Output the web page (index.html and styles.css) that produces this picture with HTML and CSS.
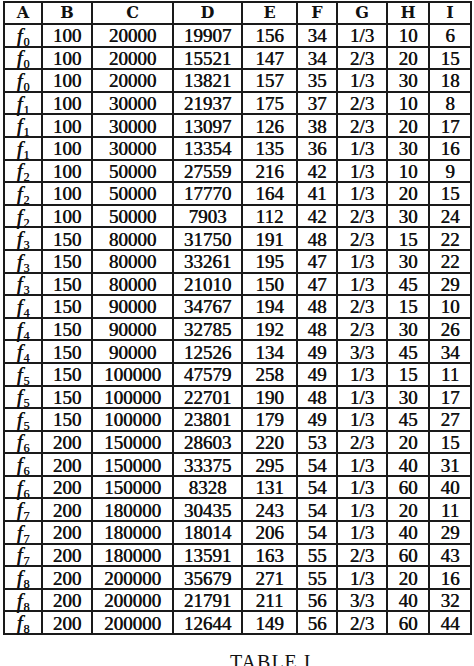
FILE: index.html
```html
<!DOCTYPE html>
<html>
<head>
<meta charset="utf-8">
<link rel="stylesheet" href="styles.css">
</head>
<body>
<table class="data">
<colgroup>
<col class="c-a"><col class="c-b"><col class="c-c"><col class="c-d"><col class="c-e"><col class="c-f"><col class="c-g"><col class="c-h"><col class="c-i">
</colgroup>
<thead>
<tr><th>A</th><th>B</th><th>C</th><th>D</th><th>E</th><th>F</th><th>G</th><th>H</th><th>I</th></tr>
</thead>
<tbody>
<tr><td><span class="fn"><i>f</i><sub>0</sub></span></td><td>100</td><td>20000</td><td>19907</td><td>156</td><td>34</td><td>1/3</td><td>10</td><td>6</td></tr>
<tr><td><span class="fn"><i>f</i><sub>0</sub></span></td><td>100</td><td>20000</td><td>15521</td><td>147</td><td>34</td><td>2/3</td><td>20</td><td>15</td></tr>
<tr><td><span class="fn"><i>f</i><sub>0</sub></span></td><td>100</td><td>20000</td><td>13821</td><td>157</td><td>35</td><td>1/3</td><td>30</td><td>18</td></tr>
<tr><td><span class="fn"><i>f</i><sub>1</sub></span></td><td>100</td><td>30000</td><td>21937</td><td>175</td><td>37</td><td>2/3</td><td>10</td><td>8</td></tr>
<tr><td><span class="fn"><i>f</i><sub>1</sub></span></td><td>100</td><td>30000</td><td>13097</td><td>126</td><td>38</td><td>2/3</td><td>20</td><td>17</td></tr>
<tr><td><span class="fn"><i>f</i><sub>1</sub></span></td><td>100</td><td>30000</td><td>13354</td><td>135</td><td>36</td><td>1/3</td><td>30</td><td>16</td></tr>
<tr><td><span class="fn"><i>f</i><sub>2</sub></span></td><td>100</td><td>50000</td><td>27559</td><td>216</td><td>42</td><td>1/3</td><td>10</td><td>9</td></tr>
<tr><td><span class="fn"><i>f</i><sub>2</sub></span></td><td>100</td><td>50000</td><td>17770</td><td>164</td><td>41</td><td>1/3</td><td>20</td><td>15</td></tr>
<tr><td><span class="fn"><i>f</i><sub>2</sub></span></td><td>100</td><td>50000</td><td>7903</td><td>112</td><td>42</td><td>2/3</td><td>30</td><td>24</td></tr>
<tr><td><span class="fn"><i>f</i><sub>3</sub></span></td><td>150</td><td>80000</td><td>31750</td><td>191</td><td>48</td><td>2/3</td><td>15</td><td>22</td></tr>
<tr><td><span class="fn"><i>f</i><sub>3</sub></span></td><td>150</td><td>80000</td><td>33261</td><td>195</td><td>47</td><td>1/3</td><td>30</td><td>22</td></tr>
<tr><td><span class="fn"><i>f</i><sub>3</sub></span></td><td>150</td><td>80000</td><td>21010</td><td>150</td><td>47</td><td>1/3</td><td>45</td><td>29</td></tr>
<tr><td><span class="fn"><i>f</i><sub>4</sub></span></td><td>150</td><td>90000</td><td>34767</td><td>194</td><td>48</td><td>2/3</td><td>15</td><td>10</td></tr>
<tr><td><span class="fn"><i>f</i><sub>4</sub></span></td><td>150</td><td>90000</td><td>32785</td><td>192</td><td>48</td><td>2/3</td><td>30</td><td>26</td></tr>
<tr><td><span class="fn"><i>f</i><sub>4</sub></span></td><td>150</td><td>90000</td><td>12526</td><td>134</td><td>49</td><td>3/3</td><td>45</td><td>34</td></tr>
<tr><td><span class="fn"><i>f</i><sub>5</sub></span></td><td>150</td><td>100000</td><td>47579</td><td>258</td><td>49</td><td>1/3</td><td>15</td><td>11</td></tr>
<tr><td><span class="fn"><i>f</i><sub>5</sub></span></td><td>150</td><td>100000</td><td>22701</td><td>190</td><td>48</td><td>1/3</td><td>30</td><td>17</td></tr>
<tr><td><span class="fn"><i>f</i><sub>5</sub></span></td><td>150</td><td>100000</td><td>23801</td><td>179</td><td>49</td><td>1/3</td><td>45</td><td>27</td></tr>
<tr><td><span class="fn"><i>f</i><sub>6</sub></span></td><td>200</td><td>150000</td><td>28603</td><td>220</td><td>53</td><td>2/3</td><td>20</td><td>15</td></tr>
<tr><td><span class="fn"><i>f</i><sub>6</sub></span></td><td>200</td><td>150000</td><td>33375</td><td>295</td><td>54</td><td>1/3</td><td>40</td><td>31</td></tr>
<tr><td><span class="fn"><i>f</i><sub>6</sub></span></td><td>200</td><td>150000</td><td>8328</td><td>131</td><td>54</td><td>1/3</td><td>60</td><td>40</td></tr>
<tr><td><span class="fn"><i>f</i><sub>7</sub></span></td><td>200</td><td>180000</td><td>30435</td><td>243</td><td>54</td><td>1/3</td><td>20</td><td>11</td></tr>
<tr><td><span class="fn"><i>f</i><sub>7</sub></span></td><td>200</td><td>180000</td><td>18014</td><td>206</td><td>54</td><td>1/3</td><td>40</td><td>29</td></tr>
<tr><td><span class="fn"><i>f</i><sub>7</sub></span></td><td>200</td><td>180000</td><td>13591</td><td>163</td><td>55</td><td>2/3</td><td>60</td><td>43</td></tr>
<tr><td><span class="fn"><i>f</i><sub>8</sub></span></td><td>200</td><td>200000</td><td>35679</td><td>271</td><td>55</td><td>1/3</td><td>20</td><td>16</td></tr>
<tr><td><span class="fn"><i>f</i><sub>8</sub></span></td><td>200</td><td>200000</td><td>21791</td><td>211</td><td>56</td><td>3/3</td><td>40</td><td>32</td></tr>
<tr><td><span class="fn"><i>f</i><sub>8</sub></span></td><td>200</td><td>200000</td><td>12644</td><td>149</td><td>56</td><td>2/3</td><td>60</td><td>44</td></tr>
</tbody>
</table>
<p class="caption">TABLE I</p>
</body>
</html>
```

FILE: styles.css
```css
html, body {
  margin: 0;
  padding: 0;
  background: #ffffff;
}
body {
  width: 474px;
  height: 666px;
  overflow: hidden;
  font-family: "Liberation Serif", "Times New Roman", serif;
  color: #111111;
}
.data {
  border-collapse: collapse;
  table-layout: fixed;
  margin: 1px 0 0 3px;
  width: 468px;
}
.c-a { width: 38px; }
.c-b { width: 50px; }
.c-c { width: 81px; }
.c-d { width: 69px; }
.c-e { width: 55px; }
.c-f { width: 40px; }
.c-g { width: 50px; }
.c-h { width: 42px; }
.c-i { width: 42px; }
.data th, .data td {
  border: 2px solid #1a1a1a;
  padding: 0;
  text-align: center;
  vertical-align: middle;
  line-height: 16px;
  white-space: nowrap;
}
.data thead tr { height: 22px; }
.data tbody tr { height: 22.6px; }
.data th {
  font-family: "DejaVu Serif", "Liberation Serif", serif;
  font-weight: bold;
  font-size: 16px;
}
.data td {
  font-family: "Liberation Serif", "Times New Roman", serif;
  font-size: 19px;
  padding-top: 2px;
  text-shadow: 0.4px 0 0 #111111;
}
.fn {
  display: inline-flex;
  align-items: baseline;
  height: 16px;
  line-height: 16px;
}
.fn i {
  font-style: italic;
  font-size: 21px;
}
.fn sub {
  font-size: 12px;
  line-height: 12px;
  vertical-align: baseline;
  position: relative;
  top: 3px;
  margin-left: 1px;
}
.caption {
  margin: 17px 0 0 0;
  padding-left: 230px;
  font-size: 20px;
  letter-spacing: 1px;
  line-height: 1;
}
```
